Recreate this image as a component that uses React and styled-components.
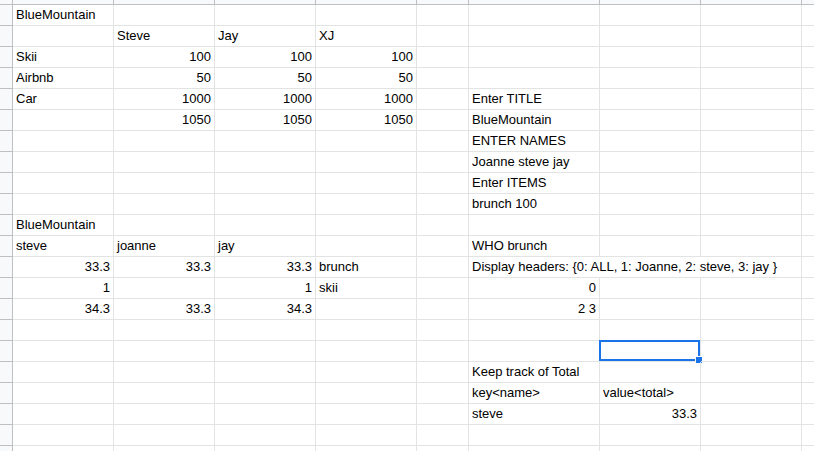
import React from "react";
import styled, { createGlobalStyle } from "styled-components";

const Global = createGlobalStyle`
  html, body { margin: 0; padding: 0; background: #fff; overflow: hidden; }
  * { box-sizing: border-box; }
`;

const COLS = [13, 101, 101, 101, 101, 52, 131, 101, 101, 20];

const Grid = styled.div`
  display: grid;
  grid-template-columns: ${COLS.map((c) => c + "px").join(" ")};
  grid-template-rows: 5px repeat(22, 21px);
  font-family: "Liberation Sans", Arial, sans-serif;
  font-size: 13px;
  color: #000;
`;

const Head = styled.div`
  background: #f8f9fa;
  border-right: 1px solid #c0c0c0;
  border-bottom: 1px solid #c0c0c0;
`;

const Cell = styled.div`
  position: relative;
  border-right: ${(p) => (p.$nob ? "none" : "1px solid #e2e3e3")};
  border-bottom: 1px solid #e2e3e3;
  padding: 0 3px;
  line-height: 20px;
  white-space: nowrap;
  text-align: ${(p) => (p.$r ? "right" : "left")};
  grid-column: ${(p) => (p.$span ? `span ${p.$span}` : "auto")};
  overflow: visible;
`;

const Sel = styled.div`
  position: absolute;
  left: -1px;
  top: -1px;
  right: 0;
  bottom: 0;
  border: 2px solid #1a73e8;
  &::after {
    content: "";
    position: absolute;
    right: -5px;
    bottom: -5px;
    width: 6px;
    height: 6px;
    background: #1a73e8;
    border: 1px solid #fff;
  }
`;

const N = null;
const rows = [
  ["BlueMountain"],
  [N, "Steve", "Jay", "XJ"],
  ["Skii", "#100", "#100", "#100"],
  ["Airbnb", "#50", "#50", "#50"],
  ["Car", "#1000", "#1000", "#1000", N, "Enter TITLE"],
  [N, "#1050", "#1050", "#1050", N, "BlueMountain"],
  [N, N, N, N, N, "ENTER NAMES"],
  [N, N, N, N, N, "Joanne steve jay"],
  [N, N, N, N, N, "Enter ITEMS"],
  [N, N, N, N, N, "brunch 100"],
  ["BlueMountain"],
  ["steve", "joanne", "jay", N, N, "WHO brunch"],
  ["#33.3", "#33.3", "#33.3", "brunch", N, "Display headers: {0: ALL, 1: Joanne, 2: steve, 3: jay }"],
  ["#1", N, "#1", "skii", N, "#0"],
  ["#34.3", "#33.3", "#34.3", N, N, "#2 3"],
  [],
  [N, N, N, N, N, N, "SEL"],
  [N, N, N, N, N, "Keep track of Total"],
  [N, N, N, N, N, "key<name>", "value<total>"],
  [N, N, N, N, N, "steve", "#33.3"],
  [],
  [],
];

export default function App() {
  const cells = [];
  COLS.forEach((_, i) => cells.push(<Head key={"h" + i} />));
  rows.forEach((r, ri) => {
    cells.push(<Head key={"g" + ri} />);
    let ci = 0;
    while (ci < 9) {
      const v = r[ci];
      if (ri === 12 && ci === 5) {
        cells.push(
          <Cell key={ri + "-" + ci} $span={3}>
            {v}
          </Cell>
        );
        ci += 3;
        continue;
      }
      const isNum = typeof v === "string" && v.startsWith("#");
      cells.push(
        <Cell key={ri + "-" + ci} $r={isNum}>
          {v === "SEL" ? <Sel /> : isNum ? v.slice(1) : v}
        </Cell>
      );
      ci++;
    }
  });
  return (
    <>
      <Global />
      <Grid>{cells}</Grid>
    </>
  );
}
